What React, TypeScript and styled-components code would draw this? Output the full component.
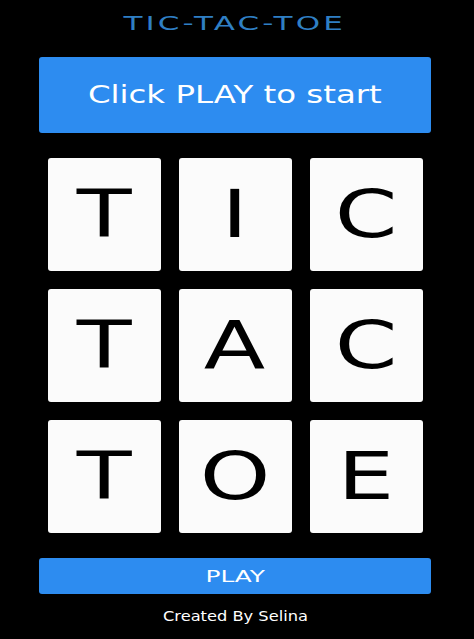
import React from 'react';
import styled, { createGlobalStyle } from 'styled-components';

const GlobalStyle = createGlobalStyle`
  html, body {
    margin: 0;
    padding: 0;
    background: #000;
  }
  body {
    font-family: 'DejaVu Sans', 'Liberation Sans', sans-serif;
  }
`;

const letters = ['T', 'I', 'C', 'T', 'A', 'C', 'T', 'O', 'E'];

const App = () => {
  return (
    <>
      <GlobalStyle />
      <Page>
        <Title>
          <Wide $scale={1.55}>TIC-TAC-TOE</Wide>
        </Title>
        <Banner>
          <Wide $scale={1.35}>Click PLAY to start</Wide>
        </Banner>
        <Board>
          {letters.map((letter, i) => (
            <Cell key={i}>
              <Wide $scale={1.36}>{letter}</Wide>
            </Cell>
          ))}
        </Board>
        <PlayButton>
          <Wide $scale={1.55}>PLAY</Wide>
        </PlayButton>
        <Credit>
          <Wide $scale={1.16}>Created By Selina</Wide>
        </Credit>
      </Page>
    </>
  );
};

export default App;

const Page = styled.div`
  width: 470px;
  height: 639px;
  background: #000;
  display: flex;
  flex-direction: column;
  align-items: center;
  overflow: hidden;
`;

const Wide = styled.span<{ $scale: number }>`
  display: inline-block;
  transform: scaleX(${(props) => props.$scale});
  white-space: nowrap;
`;

const Title = styled.h1`
  margin: 0;
  height: 45px;
  display: flex;
  align-items: center;
  justify-content: center;
  color: #2f7fc4;
  font-size: 20px;
  font-weight: normal;
  letter-spacing: 2px;
`;

const Banner = styled.div`
  margin-top: 12px;
  width: 392px;
  height: 76px;
  border-radius: 3px;
  background: #2d8cf0;
  color: #fff;
  display: flex;
  align-items: center;
  justify-content: center;
  font-size: 24px;
`;

const Board = styled.div`
  margin-top: 25px;
  display: grid;
  grid-template-columns: repeat(3, 113px);
  grid-template-rows: repeat(3, 113px);
  gap: 18px;
`;

const Cell = styled.div`
  background: #fbfbfb;
  border-radius: 3px;
  display: flex;
  align-items: center;
  justify-content: center;
  color: #000;
  font-size: 66px;
  line-height: 1;
`;

const PlayButton = styled.button`
  margin-top: 25px;
  width: 392px;
  height: 36px;
  border: none;
  border-radius: 3px;
  background: #2d8cf0;
  color: #fff;
  font-family: 'DejaVu Sans', 'Liberation Sans', sans-serif;
  font-size: 16px;
  cursor: pointer;
`;

const Credit = styled.p`
  margin: 14px 0 0;
  color: #fff;
  font-size: 14px;
`;
